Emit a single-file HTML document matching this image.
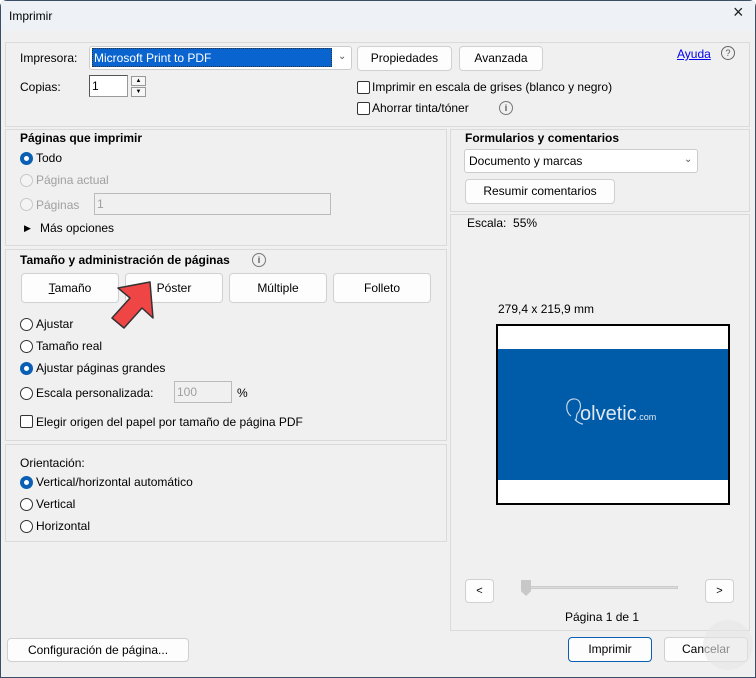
<!DOCTYPE html>
<html><head><meta charset="utf-8"><style>
*{box-sizing:border-box;margin:0;padding:0}
body{width:756px;height:678px;overflow:hidden;background:#fff;font-family:"Liberation Sans",sans-serif;font-size:12px;color:#000}
#win{position:absolute;left:0;top:0;width:756px;height:678px;background:#f0f0f0;box-shadow:inset 0 0 0 1px #3c4e66;border-radius:7px 7px 0 0;overflow:hidden}
.a{position:absolute}
.title{left:1px;top:1px;width:754px;height:30px;background:#eef2f7}
.panel{position:absolute;border:1px solid #dadada}
.btn{position:absolute;background:#fdfdfd;border:1px solid #d0d0d0;border-radius:4px;text-align:center;font-size:12px}
.t{position:absolute;white-space:nowrap;line-height:14px}
.b{font-weight:bold}
.rad{position:absolute;width:13px;height:13px;border:1px solid #333;border-radius:50%;background:#fff}
.rad.on{border:4px solid #0a5fb4}
.rad.dis{border-color:#c8c8c8;background:#f4f4f4}
.chk{position:absolute;width:13px;height:13px;border:1px solid #333;border-radius:2px;background:#fff}
.dis{color:#a0a0a0}
</style></head><body><div id="win">
<div class="a title"></div>
<div class="t" style="left:9px;top:9px">Imprimir</div>
<div class="t" style="left:733px;top:5px;font-size:18px;color:#222">×</div>

<div class="panel" style="left:5px;top:42px;width:745px;height:85px"></div>
<div class="t" style="left:20px;top:51px">Impresora:</div>
<div class="a" style="left:89px;top:46px;width:263px;height:24px;background:#fff;border:1px solid #ccc;border-radius:3px"></div>
<div class="a" style="left:92px;top:48px;width:240px;height:19px;background:#0a64d0;border:1px dotted #333"></div>
<div class="t" style="left:94px;top:51px;color:#fff">Microsoft Print to PDF</div>
<div class="t" style="left:338px;top:50px;color:#555;font-size:10px">&#8964;</div>
<div class="btn" style="left:357px;top:46px;width:95px;height:25px;line-height:23px">Propiedades</div>
<div class="btn" style="left:459px;top:46px;width:84px;height:25px;line-height:23px">Avanzada</div>
<div class="t" style="left:677px;top:47px;color:#0000ee;text-decoration:underline">Ayuda</div>
<div class="a" style="left:721px;top:46px;width:14px;height:14px;border:1px solid #666;border-radius:50%;font-size:9px;text-align:center;line-height:12px;color:#555">?</div>
<div class="t" style="left:20px;top:80px">Copias:</div>
<div class="a" style="left:89px;top:75px;width:39px;height:22px;background:#fff;border:1px solid #999;border-top-color:#555;border-left-color:#555"></div>
<div class="t" style="left:92px;top:79px">1</div>
<div class="a" style="left:131px;top:76px;width:15px;height:10px;border:1px solid #999;background:#f6f6f6;font-size:6px;text-align:center;line-height:8px">▲</div>
<div class="a" style="left:131px;top:87px;width:15px;height:10px;border:1px solid #999;background:#f6f6f6;font-size:6px;text-align:center;line-height:8px">▼</div>
<div class="chk" style="left:357px;top:81px"></div>
<div class="t" style="left:372px;top:80px">Imprimir en escala de grises (blanco y negro)</div>
<div class="chk" style="left:357px;top:102px"></div>
<div class="t" style="left:372px;top:101px">Ahorrar tinta/tóner</div>
<div class="a" style="left:499px;top:101px;width:14px;height:14px;border:1px solid #777;border-radius:50%;font-size:9px;text-align:center;line-height:12px;color:#555;font-weight:bold">i</div>

<div class="panel" style="left:5px;top:129px;width:442px;height:117px"></div>
<div class="t b" style="left:20px;top:131px">Páginas que imprimir</div>
<div class="rad on" style="left:20px;top:152px"></div><div class="t" style="left:36px;top:151px">Todo</div>
<div class="rad dis" style="left:20px;top:174px"></div><div class="t dis" style="left:36px;top:173px">Página actual</div>
<div class="rad dis" style="left:20px;top:198px"></div><div class="t dis" style="left:36px;top:198px">Páginas</div>
<div class="a" style="left:94px;top:193px;width:237px;height:22px;border:1px solid #bbb;background:#f0f0f0"></div>
<div class="t dis" style="left:97px;top:197px">1</div>
<div class="t" style="left:24px;top:221px;font-size:9px">▶</div>
<div class="t" style="left:40px;top:221px">Más opciones</div>

<div class="panel" style="left:5px;top:249px;width:442px;height:192px"></div>
<div class="t b" style="left:20px;top:253px">Tamaño y administración de páginas</div>
<div class="a" style="left:252px;top:253px;width:14px;height:14px;border:1px solid #777;border-radius:50%;font-size:9px;text-align:center;line-height:12px;color:#555;font-weight:bold">i</div>
<div class="btn" style="left:21px;top:273px;width:98px;height:30px;line-height:28px"><u>T</u>amaño</div>
<div class="btn" style="left:125px;top:273px;width:98px;height:30px;line-height:28px">Póster</div>
<div class="btn" style="left:229px;top:273px;width:98px;height:30px;line-height:28px">Múltiple</div>
<div class="btn" style="left:333px;top:273px;width:98px;height:30px;line-height:28px">Folleto</div>
<div class="rad" style="left:20px;top:318px"></div><div class="t" style="left:36px;top:317px">Ajustar</div>
<div class="rad" style="left:20px;top:340px"></div><div class="t" style="left:36px;top:339px">Tamaño real</div>
<div class="rad on" style="left:20px;top:362px"></div><div class="t" style="left:36px;top:361px">Ajustar páginas grandes</div>
<div class="rad" style="left:20px;top:387px"></div><div class="t" style="left:36px;top:386px">Escala personalizada:</div>
<div class="a" style="left:174px;top:381px;width:58px;height:22px;border:1px solid #bbb;background:#f0f0f0"></div>
<div class="t dis" style="left:177px;top:385px">100</div>
<div class="t" style="left:237px;top:386px">%</div>
<div class="chk" style="left:20px;top:415px"></div>
<div class="t" style="left:36px;top:415px">Elegir origen del papel por tamaño de página PDF</div>

<svg class="a" style="left:104px;top:278px" width="56" height="64" viewBox="0 0 56 64">
<path d="M46 4 L49 40 L38 30 L20 50 L8 40 L26 20 L14 10 Z" fill="#f04545" stroke="#333" stroke-width="1.5" stroke-linejoin="round"/>
</svg>

<div class="panel" style="left:5px;top:444px;width:442px;height:98px"></div>
<div class="t" style="left:20px;top:456px">Orientación:</div>
<div class="rad on" style="left:20px;top:476px"></div><div class="t" style="left:36px;top:475px">Vertical/horizontal automático</div>
<div class="rad" style="left:20px;top:498px"></div><div class="t" style="left:36px;top:497px">Vertical</div>
<div class="rad" style="left:20px;top:520px"></div><div class="t" style="left:36px;top:519px">Horizontal</div>

<div class="panel" style="left:450px;top:129px;width:300px;height:83px"></div>
<div class="t b" style="left:465px;top:131px">Formularios y comentarios</div>
<div class="a" style="left:464px;top:149px;width:234px;height:24px;background:#fff;border:1px solid #ccc;border-radius:3px"></div>
<div class="t" style="left:469px;top:154px">Documento y marcas</div>
<div class="t" style="left:684px;top:153px;color:#555;font-size:10px">&#8964;</div>
<div class="btn" style="left:465px;top:179px;width:150px;height:25px;line-height:23px">Resumir comentarios</div>

<div class="panel" style="left:450px;top:214px;width:300px;height:417px"></div>
<div class="t" style="left:467px;top:216px">Escala:&nbsp; 55%</div>
<div class="t" style="left:498px;top:302px">279,4 x 215,9 mm</div>
<div class="a" style="left:496px;top:324px;width:234px;height:181px;background:#fff;border:2px solid #000"></div>
<div class="a" style="left:498px;top:349px;width:230px;height:131px;background:#005ca8"></div>
<div class="t" style="left:580px;top:404px;color:#dfe8f2;font-size:20px;line-height:20px">olvetic<span style="font-size:9px">.com</span></div>
<svg class="a" style="left:563px;top:394px" width="24" height="36" viewBox="0 0 24 36"><path d="M8 22 C2 18 2 6 10 5 C18 4 20 14 14 20 L13 26 C10 24 16 30 20 30" fill="none" stroke="#c6d5e6" stroke-width="1.2"/></svg>
<div class="btn" style="left:465px;top:579px;width:29px;height:24px;line-height:22px;font-size:11px">&lt;</div>
<div class="a" style="left:524px;top:586px;width:154px;height:3px;background:#ddd;border:1px solid #ccc"></div>
<div class="a" style="left:521px;top:580px;width:10px;height:16px;background:#c8c8c8;clip-path:polygon(0 0,100% 0,100% 70%,50% 100%,0 70%)"></div>
<div class="btn" style="left:705px;top:579px;width:29px;height:24px;line-height:22px;font-size:11px">&gt;</div>
<div class="t" style="left:565px;top:610px">Página 1 de 1</div>

<div class="btn" style="left:7px;top:638px;width:182px;height:24px;line-height:22px">Configuración de página...</div>
<div class="btn" style="left:568px;top:637px;width:84px;height:25px;line-height:23px;border-color:#0a5fb4">Imprimir</div>
<div class="btn" style="left:664px;top:637px;width:84px;height:25px;line-height:23px">Cancelar</div>
<div class="a" style="left:703px;top:620px;width:50px;height:50px;border-radius:50%;background:rgba(230,230,230,0.6)"></div>
</div></body></html>
